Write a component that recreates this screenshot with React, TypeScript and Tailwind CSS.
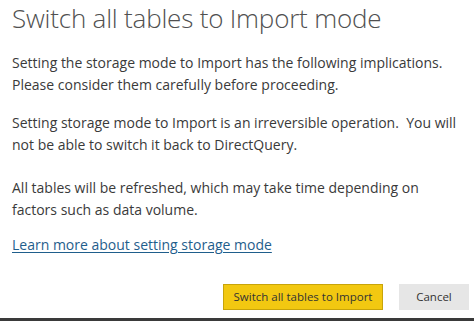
import React from 'react';

export default function App() {
  return (
    <div className="w-[474px] h-[321px] bg-white flex flex-col overflow-hidden font-['Open_Sans',sans-serif]">
      <div className="flex-1 flex flex-col pl-3 pr-[5px]">
        {/* Header */}
        <h1 className="text-[26px] leading-[34px] font-light text-[#505050] pt-[1px] tracking-[-0.2px]">
          Switch all tables to Import mode
        </h1>

        {/* Body */}
        <div className="mt-[17px] text-[14px] leading-[22px] text-[#3a3a3a]">
          <p>
            Setting the storage mode to Import has the following implications.
            <br />
            Please consider them carefully before proceeding.
          </p>
          <p className="mt-[16px]">
            Setting storage mode to Import is an irreversible operation.&nbsp; You will
            <br />
            not be able to switch it back to DirectQuery.
          </p>
          <p className="mt-[21px]">
            All tables will be refreshed, which may take time depending on
            <br />
            factors such as data volume.
          </p>
          <p className="mt-[13px]">
            <a href="#" className="text-[#1f5e8c] underline underline-offset-2">
              Learn more about setting storage mode
            </a>
          </p>
        </div>

        {/* Footer */}
        <div className="mt-auto mb-[8px] flex justify-end gap-4">
          <button className="h-[26px] w-[160px] bg-[#f2c811] border border-[#c8a40a] text-[11.5px] text-[#333]">
            Switch all tables to Import
          </button>
          <button className="h-[26px] w-[70px] bg-[#e6e6e6] text-[11.5px] text-[#333]">
            Cancel
          </button>
        </div>
      </div>
      <div className="h-[3px] bg-[#3a3a3a]" />
    </div>
  );
}
